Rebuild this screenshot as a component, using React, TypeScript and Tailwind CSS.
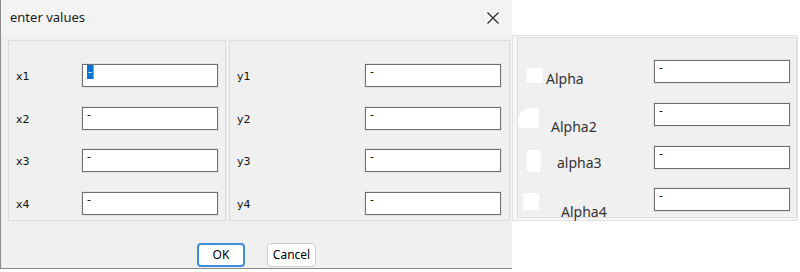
import React from 'react';

const ui = { fontFamily: '"Noto Sans", "Open Sans", sans-serif' };
const small = { fontFamily: '"DejaVu Sans", Verdana, sans-serif' };

function Field({ selected }: { selected?: boolean }) {
  return (
    <div className="h-[23px] w-[136px] border border-[#6f6f6f] bg-white pl-[4px] text-[11px] leading-[14px] text-black shadow-[0_0_0_1px_#e3e3e3]" style={small}>
      {selected ? (
        <span className="inline-flex h-[14px] items-center bg-[#0a74d4] px-[1px] text-white border-r border-[#f08a24]">-</span>
      ) : (
        <span>-</span>
      )}
    </div>
  );
}

function Group({ names, labelW, width }: { names: string[]; labelW: string; width: string }) {
  return (
    <div className={`${width} h-[181px] border border-[#dcdcdc] pt-[23px] pl-[7px] flex flex-col gap-[19.5px]`}>
      {names.map((n, i) => (
        <div key={n} className="flex items-center">
          <div className={`${labelW} pt-[4px] text-[11px] text-[#111]`} style={small}>{n}</div>
          <Field selected={i === 0 && n === 'x1'} />
        </div>
      ))}
    </div>
  );
}

export default function App() {
  return (
    <div className="flex h-[272px] w-[800px] bg-white" style={ui}>
      <div className="flex h-[269px] w-[512px] flex-col border-l border-b border-[#8a8a8a] bg-[#f0f0f0]">
        <div className="flex h-[36px] items-center justify-between pl-[9px] pr-[10px] bg-[#f3f3f3]">
          <span className="text-[13px] text-[#1a1a1a]">enter values</span>
          <svg width="14" height="14" viewBox="0 0 14 14" className="mr-[2px]">
            <path d="M1.5 1.5 L12.5 12.5 M12.5 1.5 L1.5 12.5" stroke="#222" strokeWidth="1.1" />
          </svg>
        </div>
        <div className="mt-[4px] flex gap-[3px] pl-[7px]">
          <Group names={['x1', 'x2', 'x3', 'x4']} labelW="w-[66px]" width="w-[218px]" />
          <Group names={['y1', 'y2', 'y3', 'y4']} labelW="w-[128px]" width="w-[281px]" />
        </div>
        <div className="mt-[22px] flex justify-center gap-[22px] text-[12px] text-black">
          <button className="h-[24px] w-[48px] rounded-[4px] border-2 border-[#3d8fdb] bg-white">OK</button>
          <button className="h-[24px] w-[49px] rounded-[4px] border border-[#cfcfcf] bg-white">Cancel</button>
        </div>
      </div>
      <div className="mt-[35px] h-[186px] w-[286px] border border-[#e2e2e2] bg-[#f6f6f6] pl-[4px] pt-[1px]">
        <div className="h-[181px] w-[280px] border border-[#dedede] bg-[#f0f0f0] pt-[22px] text-[14px] text-[#333]">
          <div className="flex h-[43px]">
            <div className="flex w-[136px] items-start">
              <div className="ml-[9px] mt-[8px] h-[15px] w-[16px] bg-white" />
              <span className="ml-[3px] mt-[9px] leading-[19px]">Alpha</span>
            </div>
            <Field />
          </div>
          <div className="flex h-[43px]">
            <div className="flex w-[136px] items-start">
              <div className="mt-[5px] h-[20px] w-[21px] rounded-tl-[12px] rounded-bl-[4px] bg-white" />
              <span className="ml-[12px] mt-[14px] leading-[19px]">Alpha2</span>
            </div>
            <Field />
          </div>
          <div className="flex h-[42px]">
            <div className="flex w-[136px] items-start">
              <div className="ml-[9px] mt-[4px] h-[22px] w-[14px] rounded-[3px] bg-white" />
              <span className="ml-[16px] mt-[7px] leading-[19px]">alpha3</span>
            </div>
            <Field />
          </div>
          <div className="flex h-[40px]">
            <div className="flex w-[136px] items-start">
              <div className="ml-[5px] mt-[5px] h-[17px] w-[16px] bg-white" />
              <span className="ml-[22px] mt-[14px] leading-[19px]">Alpha4</span>
            </div>
            <Field />
          </div>
        </div>
      </div>
    </div>
  );
}
